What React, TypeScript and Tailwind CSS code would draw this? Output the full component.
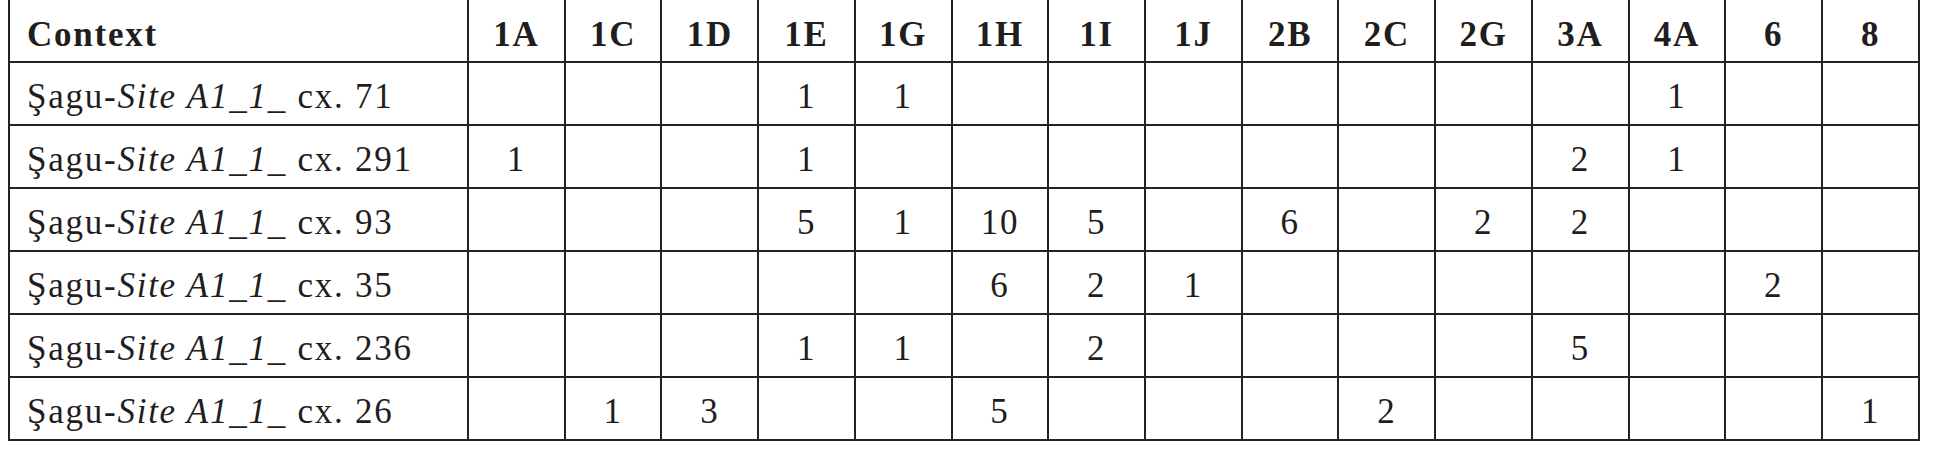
const cols = ["1A", "1C", "1D", "1E", "1G", "1H", "1I", "1J", "2B", "2C", "2G", "3A", "4A", "6", "8"];

const rows: { cx: string; vals: Record<string, string> }[] = [
  { cx: "71", vals: { "1E": "1", "1G": "1", "4A": "1" } },
  { cx: "291", vals: { "1A": "1", "1E": "1", "3A": "2", "4A": "1" } },
  { cx: "93", vals: { "1E": "5", "1G": "1", "1H": "10", "1I": "5", "2B": "6", "2G": "2", "3A": "2" } },
  { cx: "35", vals: { "1H": "6", "1I": "2", "1J": "1", "6": "2" } },
  { cx: "236", vals: { "1E": "1", "1G": "1", "1I": "2", "3A": "5" } },
  { cx: "26", vals: { "1C": "1", "1D": "3", "1H": "5", "2C": "2", "8": "1" } },
];

export default function App() {
  return (
    <div className="w-[1933px] h-[453px] bg-white pl-[8px] text-[#1f1d1e] font-['Liberation_Serif',serif]">
      <table className="table-fixed border-collapse w-[1912px] text-[35px] tracking-[0.05em]">
        <colgroup>
          <col className="w-[459px]" />
          {cols.map((c) => (
            <col key={c} />
          ))}
        </colgroup>
        <thead>
          <tr className="h-[62px]">
            <th className="border-2 border-t-0 border-[#222] text-left font-bold pl-[17px] pt-[8px] leading-none">
              Context
            </th>
            {cols.map((c) => (
              <th key={c} className="border-2 border-t-0 border-[#222] text-center font-bold pt-[8px] leading-none">
                {c}
              </th>
            ))}
          </tr>
        </thead>
        <tbody>
          {rows.map((r) => (
            <tr key={r.cx} className="h-[63px]">
              <td className="border-2 border-[#222] pl-[17px] pt-[6px] leading-none whitespace-nowrap">
                Şagu-<span className="italic">Site A1_1_</span> cx. {r.cx}
              </td>
              {cols.map((c) => (
                <td key={c} className="border-2 border-[#222] text-center pt-[6px] leading-none">
                  {r.vals[c] ?? ""}
                </td>
              ))}
            </tr>
          ))}
        </tbody>
      </table>
    </div>
  );
}
